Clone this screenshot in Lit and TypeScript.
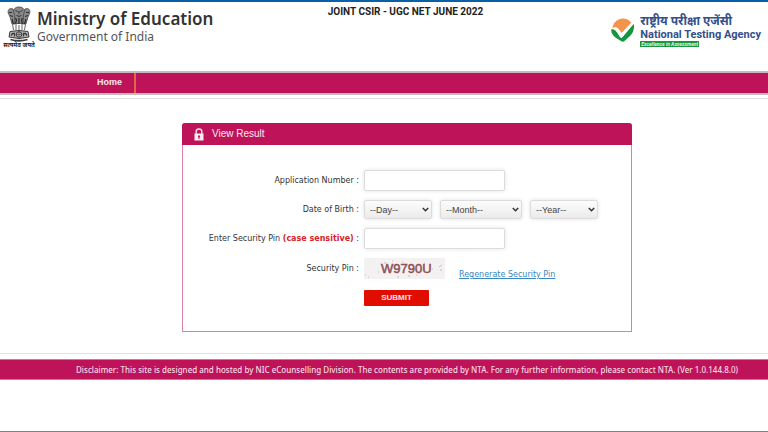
import { LitElement, html, css, svg } from "lit";
import { customElement } from "lit/decorators.js";

const emblem = svg`
  <g fill="#8a8a8a" stroke="#3c3c3c" stroke-width=".7">
    <path d="M8 2.2C9.500.500 14.500.500 16 2.200L18.500 5 17.500 9 18 17.500H6L6.500 9 5.500 5Z"/>
    <path d="M6 3C2.500 1.500.500 4 1.200 7L3.200 11.500 5 18H8L7.500 9Z"/>
    <path d="M18 3C21.500 1.500 23.500 4 22.800 7L20.800 11.500 19 18H16L16.500 9Z"/>
  </g>
  <g fill="none" stroke="#2e2e2e" stroke-width="1">
    <path d="M8.500 4.500l2 1M15.500 4.500l-2 1M12 5v3M9.500 9.500q2.500 1.800 5 0M2 6.500h3M19 6.500h3M3 9.500l3 1M21 9.500l-3 1"/>
    <path d="M8.500 12l1 2-1 4M12 12v6M15.500 12l-1 2 1 4M5 13l1.500 5M19 13l-1.500 5" stroke-width="1.300"/>
    <path d="M9 18v6M12 19v5M15 18v6M5.500 18l1 6M18.500 18l-1 6" stroke="#666"/>
  </g>
  <g fill="none" stroke="#3a3a3a">
    <path d="M3 25.500Q12 23.500 21 25.500L22 31Q12 34 2 31Z" fill="#b5b5b5"/>
    <circle cx="12" cy="28.500" r="2.800"/>
    <path d="M12 25.700v5.600M9.200 28.500h5.600" stroke-width=".600"/>
    <path d="M4 29.500l1.500-2h2v3M20 29.500l-1.500-2h-2v3" stroke-width="1.300"/>
    <path d="M3.500 33.500Q12 36 20.500 33.500" stroke-width="1.800"/>
  </g>`;

@customElement("app-root")
export class AppRoot extends LitElement {
  static styles = css`
    :host {
      display: flex;
      flex-direction: column;
      min-height: 100vh;
      box-sizing: border-box;
      border-top: 2px solid #0860a8;
      border-bottom: 1px solid #808080;
      background: #fff;
      color: #333;
      font: 8px/12px "DejaVu Sans", sans-serif;
    }
    header {
      display: grid;
      grid-template-columns: 1fr auto 1fr;
      align-items: start;
      min-height: 69px;
      padding: 4px 7px 0 4px;
      box-sizing: border-box;
    }
    .ministry { display: flex; gap: 3px; }
    .emblem {
      display: flex;
      flex-direction: column;
      align-items: center;
      width: 30px;
      color: #222;
      font: bold 6px/8px "Noto Sans Devanagari", "Noto Sans", sans-serif;
      white-space: nowrap;
    }
    .emblem svg { width: 24px; height: 36px; }
    .names { padding-top: 2px; font-family: "Noto Sans", sans-serif; white-space: nowrap; }
    .names strong { display: block; font-size: 17px; line-height: 22px; font-weight: 600; color: #333; }
    .names span { display: block; font-size: 12px; line-height: 14px; color: #555; }
    h1 { margin: 0; padding-left: 46px; font: bold 10px/12px Roboto, "Liberation Sans", sans-serif; color: #222; }
    .agency { justify-self: end; display: flex; gap: 5px; padding-top: 9px; white-space: nowrap; }
    .agency svg { width: 24px; height: 24px; margin-top: 3px; }
    .agency-text {
      display: flex;
      flex-direction: column;
      align-items: flex-start;
      color: #34508a;
      font: bold 11px/13px Roboto, "Noto Sans Devanagari", sans-serif;
    }
    .agency-text .hindi { font-size: 12px; }
    .agency-text em {
      padding: 0 1px;
      background: #18973c;
      color: #e8f5e8;
      font-size: 5px;
      line-height: 6px;
    }
    nav {
      display: flex;
      height: 20px;
      padding-left: 97px;
      background: #bf1359;
      border-top: 2px solid #c9b8c0;
      border-bottom: 2px solid #c6bcc0;
    }
    nav a {
      padding-right: 12px;
      border-right: 2px solid #e06a40;
      color: #f8e8ee;
      font: bold 9px/18px "Liberation Sans", sans-serif;
      text-decoration: none;
    }
    main {
      margin-top: 3px;
      padding: 24px 0 21px 46px;
      border-top: 1px solid #e0e0e0;
      border-bottom: 1px solid #e4e4e4;
    }
    .panel {
      max-width: 450px;
      margin: 0 auto;
      box-sizing: border-box;
      border: 1px solid #df7fa8;
      border-top: 0;
      border-radius: 3px 3px 0 0;
    }
    h2 {
      display: flex;
      align-items: center;
      gap: 8px;
      height: 22px;
      margin: 0 -1px;
      padding-left: 12px;
      border-radius: 3px 3px 0 0;
      background: #bf1359;
      color: #f9e9f0;
      font: 10px/22px "Liberation Sans", sans-serif;
    }
    h2 svg { width: 10px; height: 13px; }
    form {
      display: grid;
      grid-template-columns: 176px 1fr;
      align-items: center;
      column-gap: 5px;
      row-gap: 9px;
      padding: 25px 0;
    }
    .label { text-align: right; white-space: nowrap; }
    .label b { color: #d8232a; }
    input, select {
      box-sizing: border-box;
      height: 21px;
      margin: 0;
      border: 1px solid #dcdcdc;
      border-radius: 2px;
      background: #fff;
      box-shadow: 0 0 4px #e2e2e2;
      font: 9px "Liberation Sans", sans-serif;
      color: #444;
    }
    input { width: 141px; }
    .dates { display: flex; gap: 8px; }
    .select { position: relative; display: flex; }
    .select svg { position: absolute; right: 3px; top: 7px; width: 7px; height: 5px; pointer-events: none; }
    select {
      appearance: none;
      width: 68px;
      height: 19px;
      padding: 0 5px;
      background: linear-gradient(#fcfcfc, #ebebeb);
    }
    .month select { width: 82px; }
    .pin { display: flex; align-items: flex-end; gap: 14px; height: 21px; }
    .pin svg { width: 81px; height: 21px; background: #f3f1f2; }
    .pin svg text { font: 13px "Liberation Sans", sans-serif; }
    .pin a { color: #3a86c0; line-height: 8px; white-space: nowrap; }
    button {
      grid-column: 2;
      justify-self: start;
      width: 65px;
      height: 16px;
      margin-top: 2px;
      padding: 0;
      border: 0;
      border-radius: 1px;
      background: #e10d00;
      color: #fbe6e4;
      font: bold 8px/16px "Liberation Sans", sans-serif;
    }
    footer {
      margin-top: 5px;
      border-top: 1px solid #d8709c;
      border-bottom: 1px solid #d8709c;
      background: #bf1359;
      color: #f8dbe7;
      font: 500 8px/19px "Noto Sans", sans-serif;
      text-align: center;
      padding-left: 46px;
    }
  `;

  private select(id: string, text: string, cls = "") {
    return html`<span class="select ${cls}">
      <select id=${id} aria-label=${id}><option>${text}</option></select>
      <svg viewBox="0 0 7 5" aria-hidden="true"><path d="M.8 1l2.700 2.700L6.200 1" fill="none" stroke="#333" stroke-width="1.500"/></svg>
    </span>`;
  }

  render() {
    return html`
      <header>
        <div class="ministry">
          <div class="emblem"><svg viewBox="0 0 24 36" aria-hidden="true">${emblem}</svg>सत्यमेव जयते</div>
          <div class="names"><strong>Ministry of Education</strong><span>Government of India</span></div>
        </div>
        <h1>JOINT CSIR - UGC NET JUNE 2022</h1>
        <div class="agency">
          <svg viewBox="0 0 24 24" aria-hidden="true">
            <path d="M1.500 11A10.400 10.400 0 0 1 20.500 5L11 15.500 6.500 10Z" fill="#f3944a"/>
            <path d="M0 11.500Q5 10 7.500 15L10 18.500 22.500 5.500Q24.500 12 19 18L13.500 23Q12 24.300 10 23 0 18 0 11.500Z" fill="#14963e"/>
            <path d="M1 10.500Q5 7.500 8 11.500L10.500 15 21.500 3.500 22.800 5.800 11 19.800Q9.500 20.500 8.500 18.500 5 11.500 1 10.500Z" fill="#fff"/>
          </svg>
          <div class="agency-text"><span class="hindi">राष्ट्रीय परीक्षा एजेंसी</span><span>National Testing Agency</span><em>Excellence in Assessment</em></div>
        </div>
      </header>
      <nav><a href="#">Home</a></nav>
      <main>
        <section class="panel">
          <h2>
            <svg viewBox="0 0 10 13" aria-hidden="true">
              <path d="M2.200 6V3.200Q2.200 1 5 1t2.800 2.200V6" fill="none" stroke="#f6dfe8" stroke-width="1.400"/>
              <rect x=".5" y="5.500" width="9" height="7" fill="#fbeef3"/>
              <path d="M4 7.500h2v1.500l-.5.500V11h-1V9.500L4 9Z" fill="#bf1359"/>
            </svg>View Result
          </h2>
          <form @submit=${(e: Event) => e.preventDefault()}>
            <label class="label" for="application">Application Number :</label>
            <input id="application" type="text">
            <label class="label" for="Day">Date of Birth :</label>
            <div class="dates">
              ${this.select("Day", "--Day--")}
              ${this.select("Month", "--Month--", "month")}
              ${this.select("Year", "--Year--")}
            </div>
            <label class="label" for="pin">Enter Security Pin <b>(case sensitive)</b> :</label>
            <input id="pin" type="text">
            <span class="label">Security Pin :</span>
            <div class="pin">
              <svg viewBox="0 0 81 21">
                <path d="M1 17h1M4 19h1M20 5h2M28 3h1M33 19h2M44 18h2M52 17h1M60 5h1M68 11h1M75 9l3-2M76 12h2M14 14h1M38 4h1" stroke="#c9b9bc"/>
                <text x="17" y="15" fill="#8f5054" stroke="#8f5054" stroke-width=".5">W9790U</text>
              </svg>
              <a href="#">Regenerate Security Pin</a>
            </div>
            <button type="submit">SUBMIT</button>
          </form>
        </section>
      </main>
      <footer>Disclaimer: This site is designed and hosted by NIC eCounselling Division. The contents are provided by NTA. For any further information, please contact NTA. (Ver 1.0.144.8.0)</footer>
    `;
  }
}
